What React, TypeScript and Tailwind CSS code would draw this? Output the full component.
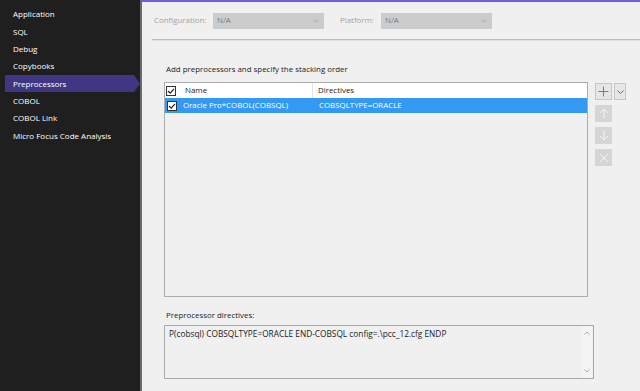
import React from "react";

const font = { fontFamily: '"Open Sans", "Noto Sans", sans-serif' };

function Check() {
  return (
    <div className="w-[10px] h-[10px] border border-[#333333] bg-white flex items-center justify-center">
      <svg width="8" height="8" viewBox="0 0 8 8">
        <path d="M1 4 L3.2 6.2 L7 1.8" fill="none" stroke="#222" strokeWidth="1.2" />
      </svg>
    </div>
  );
}

function Combo() {
  return (
    <div className="w-[111px] h-[16px] bg-[#cccccc] flex items-center justify-between pl-[4px] pr-[5px]">
      <span className="text-[7.9px] text-[#7a7a7a]">N/A</span>
      <svg width="6" height="4" viewBox="0 0 6 4">
        <path d="M0.5 0.5 L3 3 L5.5 0.5" fill="none" stroke="#a8a8a8" strokeWidth="1" />
      </svg>
    </div>
  );
}

const items = [
  "Application",
  "SQL",
  "Debug",
  "Copybooks",
  "Preprocessors",
  "COBOL",
  "COBOL Link",
  "Micro Focus Code Analysis",
];

export default function App() {
  return (
    <div className="w-[640px] h-[391px] flex overflow-hidden" style={font}>
      {/* Sidebar */}
      <div className="w-[140px] h-full bg-[#1f1f1f] pt-[5.7px] shrink-0">
        {items.map((it) =>
          it === "Preprocessors" ? (
            <div
              key={it}
              className="h-[17.33px] ml-[5px] w-[135px] bg-[#3f3783] flex items-center pl-[8px] text-[8px] font-medium text-white"
              style={{ clipPath: "polygon(0 0, 129px 0, 135px 50%, 129px 100%, 0 100%)" }}
            >
              {it}
            </div>
          ) : (
            <div key={it} className="h-[17.33px] flex items-center pl-[13px] text-[8px] font-medium text-white">
              {it}
            </div>
          )
        )}
      </div>
      <div className="w-[2px] h-full bg-[#6a6a6a] shrink-0" />
      {/* Main panel */}
      <div className="flex-1 h-full bg-[#f0f0f0] flex flex-col">
        <div className="h-[2px] bg-[#6f5fe0]" />
        <div className="mt-[11px] h-[16px] flex items-center pl-[12px]">
          <span className="w-[59px] text-[7.9px] text-[#a3a3a3]">Configuration:</span>
          <Combo />
          <span className="ml-[16px] w-[41px] text-[7.9px] text-[#a3a3a3]">Platform:</span>
          <Combo />
        </div>
        <div className="mt-[10px] ml-[10px] h-px bg-[#bdbdbd]" />
        <div className="ml-[10px] h-px bg-[#e0e0e0]" />
        <div className="mt-[23px] h-[12px] flex items-center pl-[24px] text-[7.9px] text-[#1b1b1b]">
          Add preprocessors and specify the stacking order
        </div>
        <div className="mt-[6px] flex pl-[22px]">
          <div className="w-[424px] h-[215px] border border-[#adadad] bg-[#f0f0f0] flex flex-col">
            <div className="h-[15px] bg-white flex items-center text-[7.9px] text-[#1b1b1b]">
              <div className="pl-[1px] w-[148px] h-full flex items-center border-r border-[#e3e3e3]">
                <Check />
                <span className="ml-[9px]">Name</span>
              </div>
              <span className="ml-[5px]">Directives</span>
            </div>
            <div className="h-[15px] bg-[#3399f3] flex items-center text-[7.9px] text-white">
              <div className="pl-[2px] w-[148px] h-full flex items-center">
                <Check />
                <span className="ml-[6px]">Oracle Pro*COBOL(COBSQL)</span>
              </div>
              <span className="ml-[6px]">COBSQLTYPE=ORACLE</span>
            </div>
          </div>
          <div className="ml-[7px] pt-px flex flex-col gap-[5px]">
            <div className="flex gap-[2px]">
              <div className="w-[17px] h-[17px] bg-[#e6e6e6] border border-[#c6c6c6] flex items-center justify-center">
                <svg width="11" height="11" viewBox="0 0 11 11">
                  <path d="M5.5 0.5 V10.5 M0.5 5.5 H10.5" stroke="#3ea444" strokeWidth="1" />
                </svg>
              </div>
              <div className="w-[12px] h-[17px] bg-[#e6e6e6] border border-[#c6c6c6] flex items-center justify-center">
                <svg width="7" height="4" viewBox="0 0 7 4">
                  <path d="M0.5 0.5 L3.5 3.5 L6.5 0.5" fill="none" stroke="#6a6a6a" strokeWidth="1" />
                </svg>
              </div>
            </div>
            <div className="w-[17px] h-[17px] bg-[#d5d5d5] flex items-center justify-center">
              <svg width="10" height="11" viewBox="0 0 10 11">
                <path d="M5 1 V10.5 M1 5 L5 1 L9 5" fill="none" stroke="#f5f5f5" strokeWidth="1" />
              </svg>
            </div>
            <div className="w-[17px] h-[17px] bg-[#d5d5d5] flex items-center justify-center">
              <svg width="10" height="11" viewBox="0 0 10 11">
                <path d="M5 0.5 V10 M1 6 L5 10 L9 6" fill="none" stroke="#f5f5f5" strokeWidth="1" />
              </svg>
            </div>
            <div className="w-[17px] h-[17px] bg-[#d5d5d5] flex items-center justify-center">
              <svg width="10" height="10" viewBox="0 0 10 10">
                <path d="M1 1 L9 9 M9 1 L1 9" fill="none" stroke="#f5f5f5" strokeWidth="1" />
              </svg>
            </div>
          </div>
        </div>
        <div className="mt-[13px] h-[12px] flex items-center pl-[24px] text-[7.9px] text-[#1b1b1b]">
          Preprocessor directives:
        </div>
        <div className="mt-[3px] ml-[22px] w-[430px] h-[54px] border border-[#a9a9a9] flex">
          <div className="flex-1 pl-[4px] pt-[2px] text-[8.3px] text-[#1b1b1b] leading-[12px]">
            P(cobsql) COBSQLTYPE=ORACLE END-COBSQL config=.\pcc_12.cfg ENDP
          </div>
          <div className="w-[11px] h-full bg-[#f4f4f4] flex flex-col items-center justify-between py-[5px] mr-[1px]">
            <svg width="6" height="4" viewBox="0 0 6 4">
              <path d="M0.5 3.5 L3 1 L5.5 3.5" fill="none" stroke="#b0b0b0" strokeWidth="1" />
            </svg>
            <svg width="6" height="4" viewBox="0 0 6 4">
              <path d="M0.5 0.5 L3 3 L5.5 0.5" fill="none" stroke="#b0b0b0" strokeWidth="1" />
            </svg>
          </div>
        </div>
      </div>
    </div>
  );
}
